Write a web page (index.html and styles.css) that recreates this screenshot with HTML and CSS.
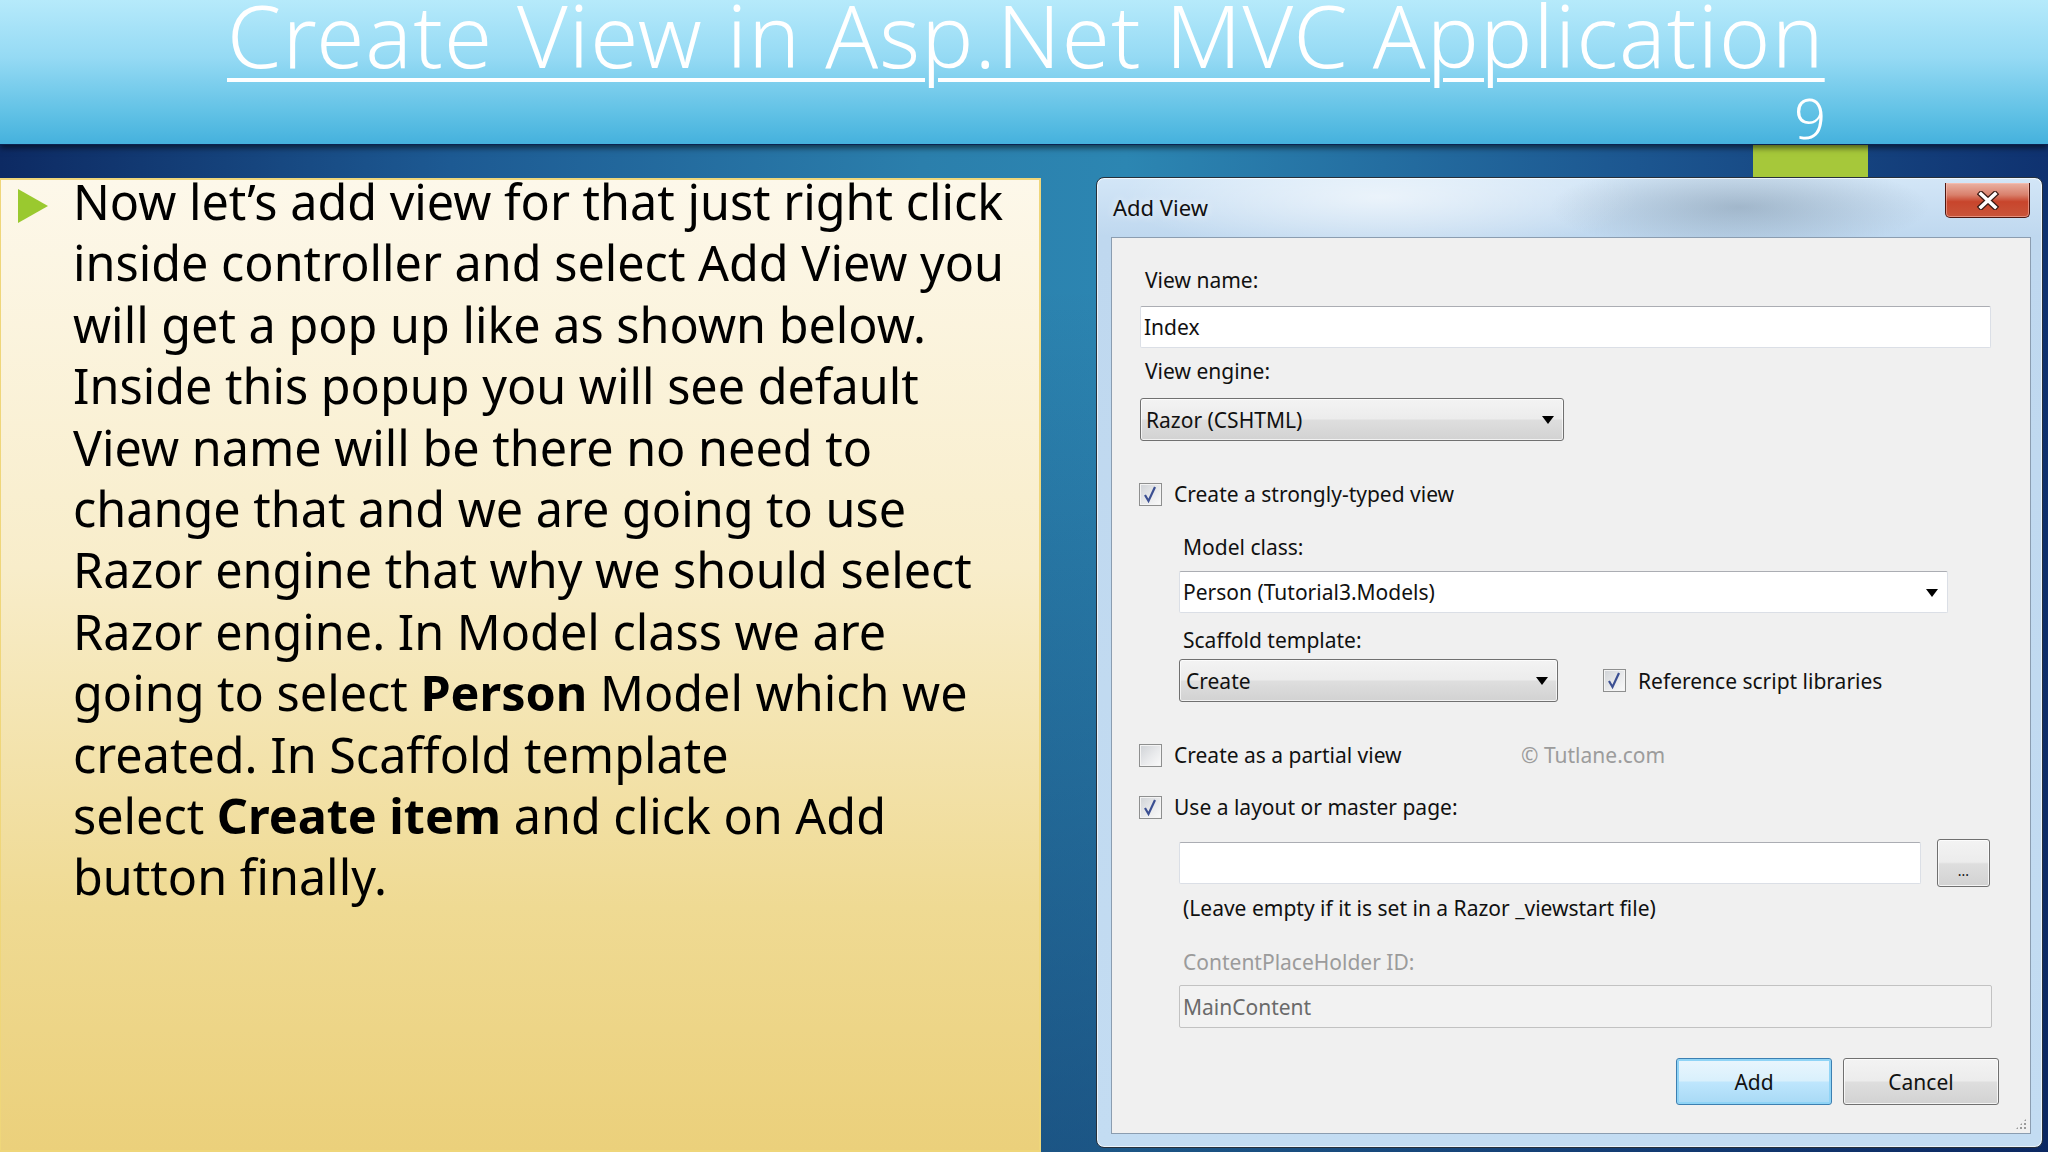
FILE: index.html
```html
<!DOCTYPE html>
<html lang="en">
<head>
    <meta charset="UTF-8">
    <title>Create View in Asp.Net MVC Application</title>
    <link rel="stylesheet" href="styles.css">
</head>
<body>
    <header class="header">
        <div class="header__inner">
            <h1 class="header__title">Create View in Asp.Net MVC Application</h1>
            <div class="header__num">9</div>
        </div>
    </header>

    <div class="band"><span class="band__accent"></span></div>

    <main class="main">
        <!-- LEFT NOTE PANEL -->
        <section class="note">
            <span class="note__bullet"></span>
            <p class="note__text">Now let’s add view for that just right click<br>inside controller and select Add View you<br>will get a pop up like as shown below.<br>Inside this popup you will see default<br>View name will be there no need to<br>change that and we are going to use<br>Razor engine that why we should select<br>Razor engine. In Model class we are<br>going to select <b>Person</b> Model which we<br>created. In Scaffold template<br>select <b>Create item</b> and click on Add<br>button finally.</p>
        </section>

        <!-- ADD VIEW DIALOG -->
        <div class="dlg">
            <div class="dlg__bar">
                <span class="dlg__title">Add View</span>
                <span class="dlg__close">
                    <svg width="22" height="19" viewBox="0 0 22 19">
                        <path d="M4 3 L18 16 M18 3 L4 16" stroke="#3a1a14" stroke-width="6" stroke-linecap="square"/>
                        <path d="M4 3 L18 16 M18 3 L4 16" stroke="#fff" stroke-width="3.6" stroke-linecap="square"/>
                    </svg>
                </span>
            </div>

            <div class="dlg__body">
                <div class="lbl">View name:</div>
                <div class="input input--name">Index</div>

                <div class="lbl lbl--engine">View engine:</div>
                <div class="combo combo--engine">Razor (CSHTML)<span class="arrow"></span></div>

                <label class="check check--typed">
                    <span class="check__box"><svg width="21" height="21" viewBox="0 0 21 21"><path d="M5 11 L8.5 17 L15 3" fill="none" stroke="#3b4f92" stroke-width="2.2"/></svg></span>
                    Create a strongly-typed view
                </label>

                <div class="indent">
                    <div class="lbl lbl--model">Model class:</div>
                    <div class="combo combo--edit">Person (Tutorial3.Models)<span class="arrow"></span></div>

                    <div class="lbl lbl--scaffold">Scaffold template:</div>
                    <div class="scaffold">
                        <div class="combo combo--scaffold">Create<span class="arrow"></span></div>
                        <label class="check">
                            <span class="check__box"><svg width="21" height="21" viewBox="0 0 21 21"><path d="M5 11 L8.5 17 L15 3" fill="none" stroke="#3b4f92" stroke-width="2.2"/></svg></span>
                            Reference script libraries
                        </label>
                    </div>
                </div>

                <div class="check-row">
                    <label class="check check--partial">
                        <span class="check__box"></span>
                        Create as a partial view
                    </label>
                    <span class="mark">© Tutlane.com</span>
                </div>

                <label class="check check--layout">
                    <span class="check__box"><svg width="21" height="21" viewBox="0 0 21 21"><path d="M5 11 L8.5 17 L15 3" fill="none" stroke="#3b4f92" stroke-width="2.2"/></svg></span>
                    Use a layout or master page:
                </label>

                <div class="indent">
                    <div class="browse">
                        <div class="input input--layout"></div>
                        <span class="btn btn--dots">...</span>
                    </div>
                    <div class="lbl lbl--hint">(Leave empty if it is set in a Razor _viewstart file)</div>
                    <div class="lbl lbl--off">ContentPlaceHolder ID:</div>
                    <div class="input input--off">MainContent</div>
                </div>

                <div class="actions">
                    <span class="btn btn--default">Add</span>
                    <span class="btn">Cancel</span>
                </div>

                <span class="grip"></span>
            </div>
        </div>
    </main>
</body>
</html>
```

FILE: styles.css
```css
@charset "UTF-8";
:root {
    --ui-font: "Noto Sans", "Open Sans", sans-serif;
    --panel-border: #efd67a;
    --ctl-border: #707070;
    --edit-border: #abadb3;
}

* {
    box-sizing: border-box;
}

html, body {
    margin: 0;
}

body {
    width: 2048px;
    height: 1152px;
    overflow: hidden;
    font-family: var(--ui-font);
    background:
        linear-gradient(180deg, rgba(8, 28, 80, 0) 25%, rgba(8, 28, 80, 0.45) 100%),
        linear-gradient(90deg, #0d2a63 0%, #1d5a93 22%, #2b7fac 45%, #2c86b2 55%, #1c5690 80%, #0f3270 100%);
}

/* HEADER */
.header {
    position: relative;
    z-index: 1;
    display: flow-root;
    height: 145px;
    background: linear-gradient(180deg, #b6eafb 0%, #95daf4 40%, #5cbfe4 82%, #45b1dd 100%);
    border-bottom: 1px solid #0b2350;
    box-shadow: 0 3px 6px rgba(0, 0, 0, 0.55);
}
.header__inner {
    width: 1594px;
    margin: 0 auto;
    color: #fff;
}
.header__title {
    margin: -9px 0 0;
    font-size: 87px;
    font-weight: 300;
    line-height: 87px;
    letter-spacing: 1.2px;
    text-align: center;
    white-space: nowrap;
    text-decoration: underline;
    text-decoration-thickness: 4px;
    text-underline-offset: 10px;
}
.header__num {
    width: fit-content;
    margin: 17px -5px 0 auto;
    font-size: 56px;
    font-weight: 300;
    line-height: 44px;
}

.band {
    height: 32px;
}
.band__accent {
    display: block;
    width: 115px;
    height: 32px;
    margin-left: 1753px;
    background: #a6c83a;
}

.main {
    display: flex;
    align-items: flex-start;
    height: 975px;
}

/* NOTE PANEL */
.note {
    display: flex;
    width: 1041px;
    height: 974px;
    margin-top: 1px;
    padding-left: 17px;
    border: 2px solid var(--panel-border);
    border-left-width: 1px;
    background: linear-gradient(180deg, #fdf8ea 0%, #f8edca 40%, #efda93 75%, #ebd07b 100%);
}
.note__bullet {
    flex: none;
    width: 0;
    height: 0;
    margin-top: 9px;
    margin-right: 25px;
    border-top: 17px solid transparent;
    border-bottom: 17px solid transparent;
    border-left: 30px solid #9ac92f;
}
.note__text {
    margin: -9px 0 0;
    color: #000;
    font-size: 48.5px;
    line-height: 61.4px;
    white-space: nowrap;
}

/* DIALOG */
.dlg {
    display: flex;
    flex-direction: column;
    width: 947px;
    height: 971px;
    margin-left: 55px;
    padding: 0 11px 13px 14px;
    border: 1px solid #26303b;
    border-radius: 8px;
    background:
        radial-gradient(ellipse 190px 45px at 68% 3%, rgba(70, 90, 110, 0.3), rgba(70, 90, 110, 0)),
        radial-gradient(ellipse 260px 60px at 30% 2%, rgba(255, 255, 255, 0.6), rgba(255, 255, 255, 0)),
        linear-gradient(180deg, #d3e6f7 0%, #bfd8ef 6%, #c3dcf2 100%);
    box-shadow: inset 0 0 0 1px rgba(255, 255, 255, 0.65);
}
.dlg__bar {
    display: flex;
    justify-content: space-between;
    align-items: flex-start;
    height: 59px;
    flex: none;
}
.dlg__title {
    padding: 16px 0 0 2px;
    font-size: 22px;
    line-height: 26px;
    color: #111;
    text-shadow: 0 0 8px rgba(255, 255, 255, 0.9);
}
.dlg__close {
    display: flex;
    justify-content: center;
    align-items: center;
    width: 85px;
    height: 35px;
    margin: 5px 1px 0 0;
    border: 1px solid #4e1710;
    border-top: 0;
    border-radius: 0 0 5px 5px;
    background: linear-gradient(180deg, #eab2a3 0%, #d9806c 35%, #c8452c 55%, #c9553a 100%);
    box-shadow: inset 0 0 0 1px rgba(255, 200, 190, 0.5);
}

.dlg__body {
    position: relative;
    flex: 1;
    padding: 30px 39px 0 28px;
    border: 1px solid #8b9db0;
    background: #f0f0f0;
    font-size: 21px;
    line-height: 24px;
    color: #111;
}

.lbl {
    height: 24px;
    padding-left: 5px;
    white-space: nowrap;
}
.lbl--engine {
    margin-top: 11px;
}
.lbl--model {
    margin-top: 29px;
    padding-left: 4px;
}
.lbl--scaffold {
    margin-top: 15px;
    padding-left: 4px;
}
.lbl--hint {
    margin-top: 9px;
    padding-left: 4px;
}
.lbl--off {
    margin-top: 30px;
    padding-left: 4px;
    color: #9b9b9b;
}

/* TEXT BOXES */
.input {
    display: flex;
    align-items: center;
    height: 42px;
    padding-left: 3px;
    border: 1px solid #dbdfe6;
    border-top-color: var(--edit-border);
    border-radius: 2px;
    background: #fff;
}
.input--name {
    margin-top: 14px;
    width: 851px;
}
.input--layout {
    width: 742px;
}
.input--off {
    width: 813px;
    height: 43px;
    margin-top: 11px;
    border-color: #c2c2c2;
    background: #f2f2f2;
    color: #6a6a6a;
}

/* COMBOS */
.combo {
    position: relative;
    display: flex;
    align-items: center;
    height: 43px;
    padding-left: 5px;
    border: 1px solid var(--ctl-border);
    border-radius: 3px;
    background: linear-gradient(180deg, #f3f3f3 0%, #ececec 48%, #dedede 52%, #d2d2d2 100%);
    box-shadow: inset 0 0 0 1px rgba(255, 255, 255, 0.7);
}
.combo--engine {
    width: 424px;
    margin-top: 15px;
}
.combo--edit {
    width: 769px;
    height: 42px;
    margin-top: 12px;
    padding-left: 3px;
    border-color: #dbdfe6;
    border-top-color: var(--edit-border);
    border-radius: 2px;
    background: #fff;
    box-shadow: none;
}
.combo--scaffold {
    width: 379px;
    padding-left: 6px;
}
.arrow {
    position: absolute;
    right: 9px;
    top: 17px;
    width: 0;
    height: 0;
    border-left: 6px solid transparent;
    border-right: 6px solid transparent;
    border-top: 8px solid #000;
}

.scaffold {
    display: flex;
    align-items: center;
    gap: 45px;
    margin-top: 7px;
}

/* CHECKBOXES */
.check {
    display: flex;
    align-items: center;
    gap: 12px;
    height: 24px;
    white-space: nowrap;
}
.check__box {
    flex: none;
    display: flex;
    justify-content: center;
    align-items: center;
    width: 23px;
    height: 23px;
    border: 1px solid #8e8f8f;
    background: linear-gradient(135deg, #cfd2d6 0%, #e9eaec 55%, #fafafa 100%);
    box-shadow: inset 0 0 0 1px #f4f4f4;
}
.check--typed {
    margin: 41px 0 0 -1px;
}
.check-row {
    display: flex;
    align-items: center;
    margin: 41px 0 0 -1px;
}
.check--partial {
    width: 382px;
}
.mark {
    color: #9c9c9c;
    white-space: nowrap;
}
.check--layout {
    margin: 28px 0 0 -1px;
}

.indent {
    margin-left: 39px;
}

.browse {
    display: flex;
    align-items: center;
    gap: 16px;
    margin-top: 20px;
}

/* BUTTONS */
.btn {
    display: flex;
    justify-content: center;
    align-items: center;
    width: 156px;
    height: 47px;
    border: 1px solid var(--ctl-border);
    border-radius: 3px;
    background: linear-gradient(180deg, #f3f3f3 0%, #ececec 48%, #dedede 52%, #d2d2d2 100%);
    box-shadow: inset 0 0 0 1px rgba(255, 255, 255, 0.75);
}
.btn--dots {
    width: 53px;
    height: 48px;
    align-items: flex-end;
    padding-bottom: 8px;
    font-size: 14px;
    line-height: 14px;
}
.btn--default {
    border-color: #3c7fb1;
    background: linear-gradient(180deg, #eaf6fd 0%, #d9f0fc 48%, #bee6fd 52%, #a7d9f5 100%);
    box-shadow: inset 0 0 0 2px #8fd4f6;
}
.actions {
    display: flex;
    justify-content: flex-end;
    gap: 11px;
    margin: 30px -8px 0 0;
}

.grip {
    position: absolute;
    right: 3px;
    bottom: 3px;
    width: 12px;
    height: 12px;
    background: radial-gradient(circle, #9a9a9a 1px, transparent 1.5px) 0 0 / 4px 4px;
    clip-path: polygon(100% 0, 100% 100%, 0 100%);
}
```
